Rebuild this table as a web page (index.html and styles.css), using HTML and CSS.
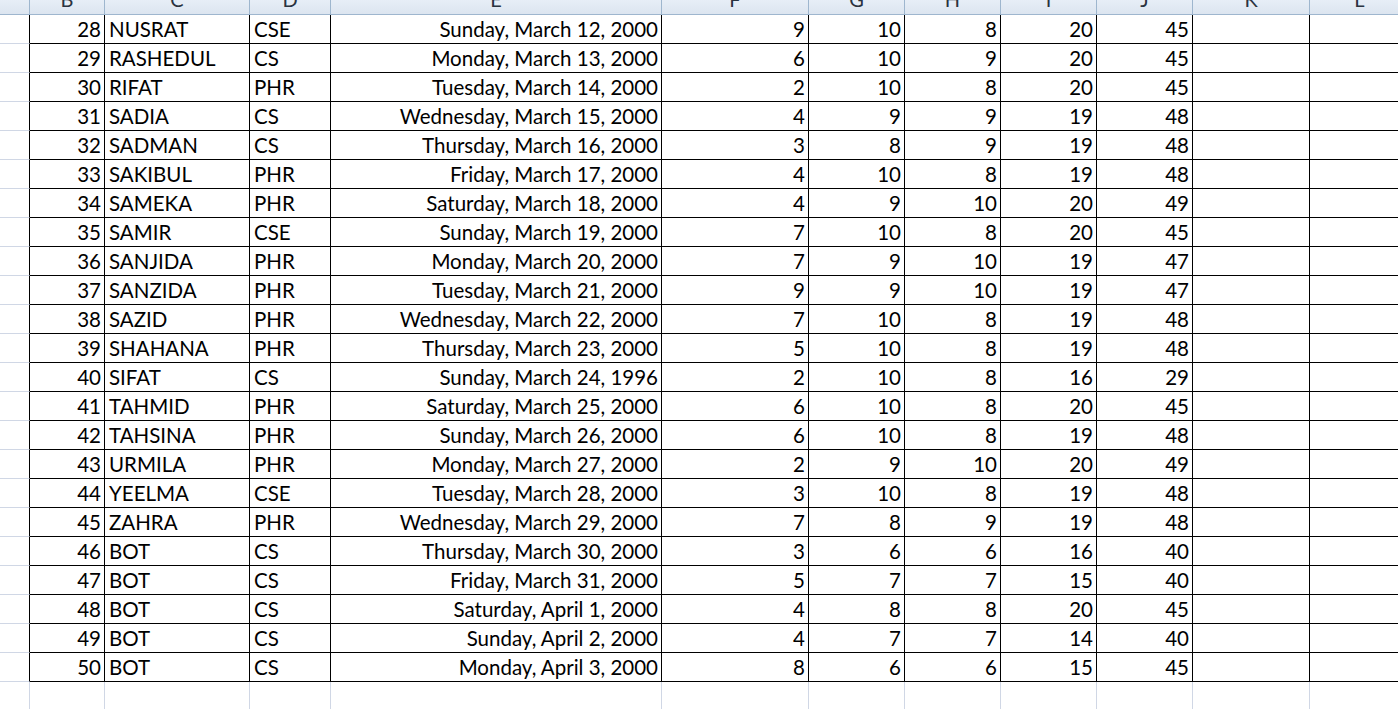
FILE: index.html
```html
<!DOCTYPE html>
<html>
<head>
<meta charset="utf-8">
<title>Sheet</title>
<link rel="stylesheet" href="styles.css">
</head>
<body>
<div class="sheet">
  <div class="row hdr">
    <div class="h"><span></span></div><div class="h"><span>B</span></div><div class="h"><span>C</span></div><div class="h"><span>D</span></div><div class="h"><span>E</span></div><div class="h"><span>F</span></div><div class="h"><span>G</span></div><div class="h"><span>H</span></div><div class="h"><span>I</span></div><div class="h"><span>J</span></div><div class="h"><span>K</span></div><div class="h"><span>L</span></div>
  </div>
  <div class="row data"><div class="a"></div><div class="c r">28</div><div class="c">NUSRAT</div><div class="c">CSE</div><div class="c r">Sunday, March 12, 2000</div><div class="c r">9</div><div class="c r">10</div><div class="c r">8</div><div class="c r">20</div><div class="c r">45</div><div class="c"></div><div class="c"></div></div>
  <div class="row data"><div class="a"></div><div class="c r">29</div><div class="c">RASHEDUL</div><div class="c">CS</div><div class="c r">Monday, March 13, 2000</div><div class="c r">6</div><div class="c r">10</div><div class="c r">9</div><div class="c r">20</div><div class="c r">45</div><div class="c"></div><div class="c"></div></div>
  <div class="row data"><div class="a"></div><div class="c r">30</div><div class="c">RIFAT</div><div class="c">PHR</div><div class="c r">Tuesday, March 14, 2000</div><div class="c r">2</div><div class="c r">10</div><div class="c r">8</div><div class="c r">20</div><div class="c r">45</div><div class="c"></div><div class="c"></div></div>
  <div class="row data"><div class="a"></div><div class="c r">31</div><div class="c">SADIA</div><div class="c">CS</div><div class="c r">Wednesday, March 15, 2000</div><div class="c r">4</div><div class="c r">9</div><div class="c r">9</div><div class="c r">19</div><div class="c r">48</div><div class="c"></div><div class="c"></div></div>
  <div class="row data"><div class="a"></div><div class="c r">32</div><div class="c">SADMAN</div><div class="c">CS</div><div class="c r">Thursday, March 16, 2000</div><div class="c r">3</div><div class="c r">8</div><div class="c r">9</div><div class="c r">19</div><div class="c r">48</div><div class="c"></div><div class="c"></div></div>
  <div class="row data"><div class="a"></div><div class="c r">33</div><div class="c">SAKIBUL</div><div class="c">PHR</div><div class="c r">Friday, March 17, 2000</div><div class="c r">4</div><div class="c r">10</div><div class="c r">8</div><div class="c r">19</div><div class="c r">48</div><div class="c"></div><div class="c"></div></div>
  <div class="row data"><div class="a"></div><div class="c r">34</div><div class="c">SAMEKA</div><div class="c">PHR</div><div class="c r">Saturday, March 18, 2000</div><div class="c r">4</div><div class="c r">9</div><div class="c r">10</div><div class="c r">20</div><div class="c r">49</div><div class="c"></div><div class="c"></div></div>
  <div class="row data"><div class="a"></div><div class="c r">35</div><div class="c">SAMIR</div><div class="c">CSE</div><div class="c r">Sunday, March 19, 2000</div><div class="c r">7</div><div class="c r">10</div><div class="c r">8</div><div class="c r">20</div><div class="c r">45</div><div class="c"></div><div class="c"></div></div>
  <div class="row data"><div class="a"></div><div class="c r">36</div><div class="c">SANJIDA</div><div class="c">PHR</div><div class="c r">Monday, March 20, 2000</div><div class="c r">7</div><div class="c r">9</div><div class="c r">10</div><div class="c r">19</div><div class="c r">47</div><div class="c"></div><div class="c"></div></div>
  <div class="row data"><div class="a"></div><div class="c r">37</div><div class="c">SANZIDA</div><div class="c">PHR</div><div class="c r">Tuesday, March 21, 2000</div><div class="c r">9</div><div class="c r">9</div><div class="c r">10</div><div class="c r">19</div><div class="c r">47</div><div class="c"></div><div class="c"></div></div>
  <div class="row data"><div class="a"></div><div class="c r">38</div><div class="c">SAZID</div><div class="c">PHR</div><div class="c r">Wednesday, March 22, 2000</div><div class="c r">7</div><div class="c r">10</div><div class="c r">8</div><div class="c r">19</div><div class="c r">48</div><div class="c"></div><div class="c"></div></div>
  <div class="row data"><div class="a"></div><div class="c r">39</div><div class="c">SHAHANA</div><div class="c">PHR</div><div class="c r">Thursday, March 23, 2000</div><div class="c r">5</div><div class="c r">10</div><div class="c r">8</div><div class="c r">19</div><div class="c r">48</div><div class="c"></div><div class="c"></div></div>
  <div class="row data"><div class="a"></div><div class="c r">40</div><div class="c">SIFAT</div><div class="c">CS</div><div class="c r">Sunday, March 24, 1996</div><div class="c r">2</div><div class="c r">10</div><div class="c r">8</div><div class="c r">16</div><div class="c r">29</div><div class="c"></div><div class="c"></div></div>
  <div class="row data"><div class="a"></div><div class="c r">41</div><div class="c">TAHMID</div><div class="c">PHR</div><div class="c r">Saturday, March 25, 2000</div><div class="c r">6</div><div class="c r">10</div><div class="c r">8</div><div class="c r">20</div><div class="c r">45</div><div class="c"></div><div class="c"></div></div>
  <div class="row data"><div class="a"></div><div class="c r">42</div><div class="c">TAHSINA</div><div class="c">PHR</div><div class="c r">Sunday, March 26, 2000</div><div class="c r">6</div><div class="c r">10</div><div class="c r">8</div><div class="c r">19</div><div class="c r">48</div><div class="c"></div><div class="c"></div></div>
  <div class="row data"><div class="a"></div><div class="c r">43</div><div class="c">URMILA</div><div class="c">PHR</div><div class="c r">Monday, March 27, 2000</div><div class="c r">2</div><div class="c r">9</div><div class="c r">10</div><div class="c r">20</div><div class="c r">49</div><div class="c"></div><div class="c"></div></div>
  <div class="row data"><div class="a"></div><div class="c r">44</div><div class="c">YEELMA</div><div class="c">CSE</div><div class="c r">Tuesday, March 28, 2000</div><div class="c r">3</div><div class="c r">10</div><div class="c r">8</div><div class="c r">19</div><div class="c r">48</div><div class="c"></div><div class="c"></div></div>
  <div class="row data"><div class="a"></div><div class="c r">45</div><div class="c">ZAHRA</div><div class="c">PHR</div><div class="c r">Wednesday, March 29, 2000</div><div class="c r">7</div><div class="c r">8</div><div class="c r">9</div><div class="c r">19</div><div class="c r">48</div><div class="c"></div><div class="c"></div></div>
  <div class="row data"><div class="a"></div><div class="c r">46</div><div class="c">BOT</div><div class="c">CS</div><div class="c r">Thursday, March 30, 2000</div><div class="c r">3</div><div class="c r">6</div><div class="c r">6</div><div class="c r">16</div><div class="c r">40</div><div class="c"></div><div class="c"></div></div>
  <div class="row data"><div class="a"></div><div class="c r">47</div><div class="c">BOT</div><div class="c">CS</div><div class="c r">Friday, March 31, 2000</div><div class="c r">5</div><div class="c r">7</div><div class="c r">7</div><div class="c r">15</div><div class="c r">40</div><div class="c"></div><div class="c"></div></div>
  <div class="row data"><div class="a"></div><div class="c r">48</div><div class="c">BOT</div><div class="c">CS</div><div class="c r">Saturday, April 1, 2000</div><div class="c r">4</div><div class="c r">8</div><div class="c r">8</div><div class="c r">20</div><div class="c r">45</div><div class="c"></div><div class="c"></div></div>
  <div class="row data"><div class="a"></div><div class="c r">49</div><div class="c">BOT</div><div class="c">CS</div><div class="c r">Sunday, April 2, 2000</div><div class="c r">4</div><div class="c r">7</div><div class="c r">7</div><div class="c r">14</div><div class="c r">40</div><div class="c"></div><div class="c"></div></div>
  <div class="row data"><div class="a"></div><div class="c r">50</div><div class="c">BOT</div><div class="c">CS</div><div class="c r">Monday, April 3, 2000</div><div class="c r">8</div><div class="c r">6</div><div class="c r">6</div><div class="c r">15</div><div class="c r">45</div><div class="c"></div><div class="c"></div></div>
  <div class="row blank">
    <div class="e"></div><div class="e"></div><div class="e"></div><div class="e"></div><div class="e"></div><div class="e"></div><div class="e"></div><div class="e"></div><div class="e"></div><div class="e"></div><div class="e"></div><div class="e"></div>
  </div>
</div>
</body>
</html>
```

FILE: styles.css
```css
html, body {
  margin: 0;
  padding: 0;
  background: #ffffff;
  overflow: hidden;
}

.sheet {
  width: 1410px;
  font-family: Lato, "Open Sans", sans-serif;
  font-size: 20.5px;
  color: #000000;
}

.row {
  display: grid;
  grid-template-columns: 30px 75px 145px 81px 331px 147px 96px 96px 96px 96px 117px 100px;
}

.row > div {
  box-sizing: border-box;
  white-space: nowrap;
  overflow: hidden;
}

/* column header strip */
.hdr {
  height: 15px;
}

.h {
  height: 15px;
  background: linear-gradient(#e7eef7, #dce5f0);
  border-right: 1px solid #9eb6ce;
  border-bottom: 1px solid #9eb6ce;
  display: flex;
  justify-content: center;
  align-items: flex-end;
  color: #2a3340;
}

.h span {
  font-size: 20px;
  line-height: 1;
  margin-bottom: 5px;
}

/* data rows */
.data {
  height: 29px;
}

.data .a {
  border-right: 1px solid #000000;
  border-bottom: 1px solid #d0d7e5;
}

.c {
  border-right: 1px solid #000000;
  border-bottom: 1px solid #000000;
  line-height: 28px;
  padding: 0 3px 0 4px;
}

.c.r {
  text-align: right;
}

/* empty rows below the table */
.blank {
  height: 29px;
}

.e {
  border-right: 1px solid #d0d7e5;
  border-bottom: 1px solid #d0d7e5;
}
```
